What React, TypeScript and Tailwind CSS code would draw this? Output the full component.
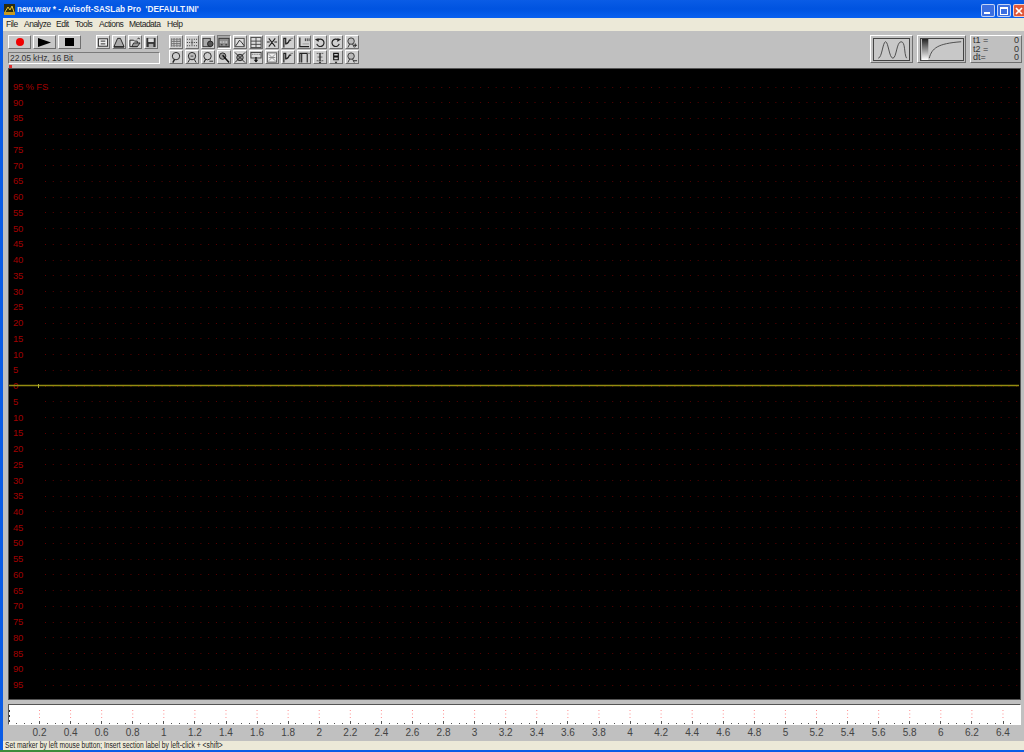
import type { ReactNode } from "react";

const raised = "border border-t-white border-l-white border-r-[#6f6f6f] border-b-[#6f6f6f]";
const sunken = "border border-t-[#7a7a7a] border-l-[#7a7a7a] border-r-white border-b-white";

const yLabels = [95, 90, 85, 80, 75, 70, 65, 60, 55, 50, 45, 40, 35, 30, 25, 20, 15, 10, 5, 0, 5, 10, 15, 20, 25, 30, 35, 40, 45, 50, 55, 60, 65, 70, 75, 80, 85, 90, 95];
const xLabels = ["0.2", "0.4", "0.6", "0.8", "1", "1.2", "1.4", "1.6", "1.8", "2", "2.2", "2.4", "2.6", "2.8", "3", "3.2", "3.4", "3.6", "3.8", "4", "4.2", "4.4", "4.6", "4.8", "5", "5.2", "5.4", "5.6", "5.8", "6", "6.2", "6.4"];
const STEP = 31.08;

const topIcons: ReactNode[] = [
  <><rect x="1" y="2" width="11" height="9" fill="#777" /><path d="M2 4h9M2 6.500h9M2 9h9M3 2v9M6 2v9M9 2v9" stroke="#ddd" strokeDasharray="1 1" /></>,
  <><path d="M1 3h11M1 6.500h11M1 10h11" stroke="#222" strokeDasharray="1 1.500" /><path d="M6.500 4v5" stroke="#444" /></>,
  <><rect x="1" y="2" width="8" height="9" fill="#aaa" stroke="#333" /><circle cx="9" cy="8" r="3" fill="#555" stroke="#222" /></>,
  <><rect x="1" y="2" width="11" height="9" fill="#8d8d8d" stroke="#333" /><path d="M2 6h9" stroke="#eee" strokeDasharray="2 1" /><path d="M3 9h2M8 9h2" stroke="#222" /></>,
  <><rect x="1" y="2" width="10" height="9" fill="#ddd" stroke="#444" /><path d="M2 10l4-6 2 2 3 4" stroke="#222" fill="none" /></>,
  <><rect x="1" y="1" width="11" height="11" fill="#ddd" stroke="#444" /><path d="M1 5h11M1 8.500h11M6.500 1v11" stroke="#444" /></>,
  <path d="M3 2l7 9M10 2l-7 9M1 6h3M9 6h3" stroke="#222" strokeWidth="1.200" fill="none" />,
  <><path d="M2 12V2h2v6c1 0 3-1 4-4h2" stroke="#222" strokeWidth="1.300" fill="none" /><path d="M9 2h3" stroke="#777" /></>,
  <><path d="M2 1v10h10" stroke="#222" strokeWidth="1.300" fill="none" /><path d="M5 8h7" stroke="#999" /><path d="M8 2v3M10 2v3M12 2v3" stroke="#333" /></>,
  <><path d="M3 8a4 4 0 1 0 1-4" stroke="#222" strokeWidth="1.300" fill="none" /><path d="M1 3l4-1v4z" fill="#222" /></>,
  <><path d="M10 8a4 4 0 1 1-1-4" stroke="#222" strokeWidth="1.300" fill="none" /><path d="M12 3l-4-1v4z" fill="#222" /></>,
  <><circle cx="5.500" cy="5" r="3.500" fill="#bbb" stroke="#333" /><path d="M4 8l-2 4M7 8l2 4" stroke="#333" /><path d="M8 9.500h4M10 7.500v4" stroke="#222" /></>,
];

const bottomIcons: ReactNode[] = [
  <><circle cx="6.500" cy="5" r="4" fill="#ccc" stroke="#222" /><path d="M5 8.500l-2 3.500" stroke="#222" strokeWidth="1.500" /></>,
  <><circle cx="6.500" cy="5" r="4" fill="#bbb" stroke="#222" /><path d="M4 8.500l-2 3.500M9 8.500l2 3.500" stroke="#222" /><path d="M5 5h3" stroke="#444" /></>,
  <><circle cx="6" cy="5" r="4" fill="#ccc" stroke="#222" /><path d="M4 8.500l-2 3.500" stroke="#222" strokeWidth="1.200" /><path d="M8 10.500h4" stroke="#222" /></>,
  <><circle cx="5" cy="5" r="3.500" fill="#999" stroke="#222" /><path d="M5 4l7 8" stroke="#111" strokeWidth="1.600" /></>,
  <><circle cx="6.500" cy="6.500" r="3.500" fill="#999" stroke="#222" /><path d="M1 1l11 11M12 1L1 12" stroke="#222" /></>,
  <><rect x="1" y="1" width="11" height="6" fill="#ddd" stroke="#333" /><path d="M2 3h9" stroke="#555" strokeDasharray="1 1" /><path d="M6.500 6v5" stroke="#111" strokeWidth="1.500" /><path d="M4 9h5l-2.500 3z" fill="#111" /></>,
  <><rect x="1.500" y="1.500" width="10" height="10" fill="#eee" stroke="#555" /><path d="M3 3l7 7M10 3l-7 7M3 6.500h7" stroke="#888" /></>,
  <><path d="M2 12V2h2v6c1 0 3-1 4-4h2" stroke="#222" strokeWidth="1.300" fill="none" /><path d="M9 2h3" stroke="#777" /></>,
  <><path d="M2 12V2h8v10M4 2v10" stroke="#222" strokeWidth="1.200" fill="none" /><path d="M10 2h3" stroke="#777" /></>,
  <><path d="M3 2h7M3 10h7M4 6h5" stroke="#222" strokeDasharray="1 1" /><path d="M6.500 2v8" stroke="#111" strokeWidth="1.300" /><path d="M5 11h3l-1.500 2z" fill="#111" /></>,
  <><path d="M4 2h5v3H4zM4 6h5v3H4z" fill="none" stroke="#111" strokeWidth="1.200" /><path d="M5 11h3l-1.500 2z" fill="#111" /></>,
  <><circle cx="5.500" cy="5" r="3.500" fill="#bbb" stroke="#333" /><path d="M4 8l-2 4M7 8l2 4" stroke="#333" /><path d="M8 10h4" stroke="#222" /></>,
];

const fileIcons: ReactNode[] = [
  <><rect x="1.500" y="2.500" width="10" height="8" fill="#eee" stroke="#222" /><path d="M4 5h5M4 8h5" stroke="#222" /></>,
  <><path d="M1 11L5 2h3l4 9z" fill="#aaa" stroke="#222" /><path d="M1 11.500h11" stroke="#111" /></>,
  <><path d="M1 11V4h4l1 1h3v6z" fill="#ddd" stroke="#222" /><path d="M3 11l2-4h7l-3 4z" fill="#999" stroke="#222" /><path d="M9 3c1-2 2-1 3 0" stroke="#222" fill="none" /></>,
  <><rect x="1.500" y="1.500" width="10" height="10" fill="#333" /><rect x="3.500" y="2" width="6" height="4" fill="#ddd" /><rect x="4" y="8" width="5" height="3.500" fill="#aaa" /></>,
];

function ToolButton({ children, pressed }: { children: ReactNode; pressed?: boolean }) {
  return (
    <div className={`flex h-[14px] w-[14px] items-center justify-center ${pressed ? sunken + " bg-[#a8a8a8]" : raised + " bg-[#d0d0d0]"}`}>
      <svg width="13" height="13" viewBox="0 0 13 13">{children}</svg>
    </div>
  );
}

function TransportButton({ children }: { children: ReactNode }) {
  return <div className={`flex h-[14px] w-[23px] items-center justify-center bg-[#c8c8c8] ${raised}`}>{children}</div>;
}

function TitleBar() {
  return (
    <div className="flex h-[18px] items-center bg-gradient-to-b from-[#0a5ce6] via-[#0053e0] to-[#0a61f0] pl-[4px]">
      <svg width="11" height="11" viewBox="0 0 11 11" className="mr-[2px] shrink-0">
        <rect width="11" height="11" fill="#2c2c10" />
        <path d="M1 8l3-5 2 3 2-4 2 6" stroke="#e8c830" fill="none" />
        <rect y="8" width="11" height="3" fill="#c89a20" />
      </svg>
      <span className="origin-left scale-x-[0.867] whitespace-pre text-[9.500px] font-bold text-[#eef3ff] [font-family:'Liberation_Sans',sans-serif]">new.wav * - Avisoft-SASLab Pro  'DEFAULT.INI'</span>
      <div className="ml-auto flex gap-[2px] self-end pb-[1px]">
        <div className="flex h-[13px] w-[14px] items-end rounded-[2px] border border-white/70 bg-[#3c6fe0] p-[2px]"><div className="h-[2px] w-[6px] bg-white" /></div>
        <div className="flex h-[13px] w-[14px] items-center justify-center rounded-[2px] border border-white/70 bg-[#3c6fe0]"><div className="h-[8px] w-[8px] border border-t-2 border-white" /></div>
        <div className="flex h-[13px] w-[11px] items-center justify-center rounded-l-[2px] border border-r-0 border-white/70 bg-[#e0583a]">
          <svg width="8" height="8" viewBox="0 0 8 8"><path d="M1 1l6 6M7 1l-6 6" stroke="#fff" strokeWidth="1.600" /></svg>
        </div>
      </div>
    </div>
  );
}

function MenuBar() {
  const items: [string, string][] = [["File", "w-[18px]"], ["Analyze", "w-[32px]"], ["Edit", "w-[19px]"], ["Tools", "w-[24px]"], ["Actions", "w-[30px]"], ["Metadata", "w-[38px]"], ["Help", "w-[20px]"]];
  return (
    <div className="flex h-[13px] items-center bg-[#ece9d8] pl-[3px] text-[8.500px] tracking-[-0.5px] text-[#222] [font-family:'Liberation_Sans',sans-serif]">
      {items.map(([t, w]) => <span key={t} className={w}>{t}</span>)}
    </div>
  );
}

function Toolbar() {
  return (
    <div className="flex h-[37px] bg-[#c0c0c0] pt-[4px] pl-[5px] pr-[2px]">
      <div className="flex w-[152px] flex-col gap-[3px]">
        <div className="flex">
          <div className="flex gap-[2px]">
            <TransportButton><div className="h-[8px] w-[8px] rounded-full bg-[#f00000]" /></TransportButton>
            <TransportButton><svg width="13" height="9" viewBox="0 0 13 9"><path d="M0 0l13 4.500L0 9z" fill="#000" /></svg></TransportButton>
            <TransportButton><div className="h-[8px] w-[9px] bg-black" /></TransportButton>
          </div>
          <div className="ml-[15px] flex gap-[2px]">
            {fileIcons.map((ic, i) => <ToolButton key={i}>{ic}</ToolButton>)}
          </div>
        </div>
        <div className={`flex h-[12px] items-center pl-[1px] text-[8.500px] tracking-[-0.1px] text-[#333] [font-family:'Liberation_Sans',sans-serif] ${sunken}`}>22.05 kHz, 16 Bit</div>
      </div>
      <div className="ml-[9px] flex flex-col gap-[1px]">
        <div className="flex gap-[2px]">{topIcons.map((ic, i) => <ToolButton key={i} pressed={i === 3}>{ic}</ToolButton>)}</div>
        <div className="flex gap-[2px]">{bottomIcons.map((ic, i) => <ToolButton key={i}>{ic}</ToolButton>)}</div>
      </div>
      <div className="ml-auto flex h-[28px] gap-[4px]">
        <div className={`flex w-[43px] items-center justify-center ${raised}`}>
          <svg width="37" height="23" viewBox="0 0 37 23" className="border border-[#444] bg-[#c8c8c8]">
            <path d="M4 21C8 21 9 3 12 3S16 21 20 21 24 3 29 3 32 16 35 21" stroke="#444" fill="none" />
          </svg>
        </div>
        <div className={`flex w-[49px] items-center justify-center ${raised}`}>
          <svg width="44" height="23" viewBox="0 0 44 23" className="border border-[#444] bg-[#c8c8c8]">
            <defs><linearGradient id="gr" x1="0" y1="0" x2="0" y2="1"><stop offset="0" stopColor="#222" /><stop offset="1" stopColor="#fff" /></linearGradient></defs>
            <rect x="0" y="0" width="7" height="23" fill="url(#gr)" />
            <path d="M8 21C11 10 17 5 43 3" stroke="#444" fill="none" />
          </svg>
        </div>
        <div className={`flex w-[52px] flex-col justify-center pl-[2px] pr-[2px] text-[9px] leading-[8.500px] text-[#333] [font-family:'Liberation_Sans',sans-serif] ${raised}`}>
          {["t1 =", "t2 =", "dt="].map((t) => (
            <div key={t} className="flex justify-between"><span>{t}</span><span>0</span></div>
          ))}
        </div>
      </div>
    </div>
  );
}

function Plot() {
  const rows = yLabels.map((_, i) => 17.500 + i * 15.74);
  return (
    <div className="relative h-[632px] border border-[#555] bg-black">
      {/* start marker sits just over the plot's top edge */}
      <div className="absolute -top-[4px] left-0 h-[3px] w-[3px] bg-[#e03030]" />
      <svg width="1010" height="630" className="block">
        {rows.map((y, i) => (
          <g key={i}>
            <line x1="36" x2="1010" y1={Math.round(y) + 0.5} y2={Math.round(y) + 0.5} stroke="#5a0000" strokeDasharray="1 6.770" />
            <text x="4" y={y + 3.500} fill="#a00000" fontSize="9.500" letterSpacing="-0.2" fontFamily="Liberation Sans, sans-serif">{yLabels[i]}{i === 0 ? " % FS" : ""}</text>
          </g>
        ))}
        <line x1="0" x2="1010" y1="316.500" y2="316.500" stroke="#948c10" strokeWidth="1.500" />
        <path d="M29.500 315v4" stroke="#b0b030" />
      </svg>
    </div>
  );
}

function Axis() {
  return (
    <>
      <div className={`mt-[4px] h-[21px] bg-white ${sunken} border-t-[#555] border-l-[#555]`}>
        <svg width="1010" height="19" className="block">
          <path d="M0.500 5v2M0.500 10v2M0.500 15v2" stroke="#333" />
          {xLabels.map((l, i) => (
            <line key={l} x1={30.500 + i * STEP} x2={30.500 + i * STEP} y1="5" y2="15" stroke="#ff9090" strokeDasharray="1 2.500" />
          ))}
          {Array.from({ length: 130 }, (_, i) => (
            <line key={i} x1={Math.round(i * STEP / 4) - 0.500} x2={Math.round(i * STEP / 4) - 0.500} y1={i % 4 === 0 ? 16 : 18} y2="19" stroke="#555" />
          ))}
        </svg>
      </div>
      <svg width="1012" height="16" className="block">
        {xLabels.map((l, i) => (
          <text key={l} x={31.500 + i * STEP} y="11" textAnchor="middle" fontSize="10" fill="#444" fontFamily="Liberation Sans, sans-serif">{l}</text>
        ))}
      </svg>
    </>
  );
}

export default function App() {
  return (
    <div className="flex h-[752px] w-[1024px] flex-col overflow-hidden bg-[#0a5ce6]">
      <TitleBar />
      <div className="ml-[3px] flex h-[732px] flex-col">
        <MenuBar />
        <Toolbar />
        <div className="flex-1 bg-[#c0c0c0] pl-[5px] pr-[3px]">
          <Plot />
          <Axis />
        </div>
        <div className="flex h-[9px] items-center bg-[#ece9d8] pl-[2px] text-[8.500px] text-[#222] [font-family:'Liberation_Sans',sans-serif]">
          <span className="origin-left scale-x-[0.79] whitespace-pre">Set marker by left mouse button; Insert section label by left-click + &lt;shift&gt;</span>
        </div>
      </div>
      <div className="h-[2px] w-[70px] bg-[#3c8c3c]" />
    </div>
  );
}
